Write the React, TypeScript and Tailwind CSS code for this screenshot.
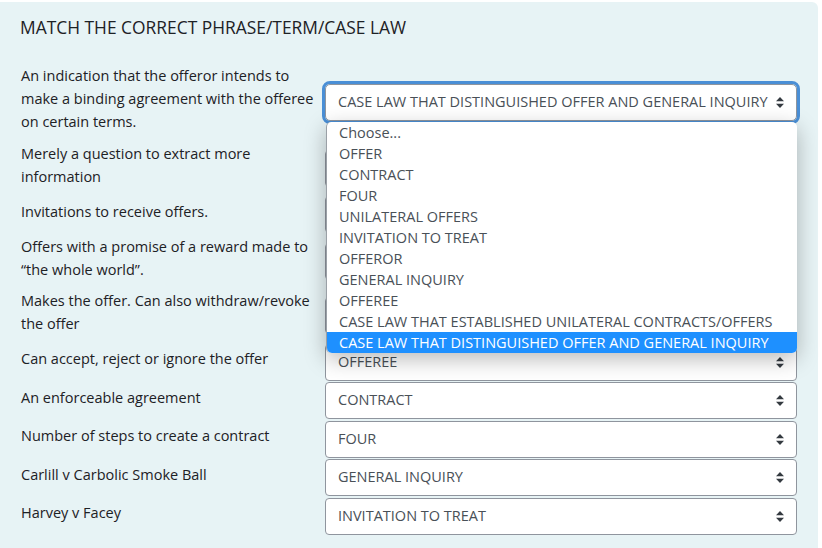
const font = "font-['Segoe_UI','Open_Sans','Noto_Sans',sans-serif]";

const options = [
  "Choose...",
  "OFFER",
  "CONTRACT",
  "FOUR",
  "UNILATERAL OFFERS",
  "INVITATION TO TREAT",
  "OFFEROR",
  "GENERAL INQUIRY",
  "OFFEREE",
  "CASE LAW THAT ESTABLISHED UNILATERAL CONTRACTS/OFFERS",
  "CASE LAW THAT DISTINGUISHED OFFER AND GENERAL INQUIRY",
];

// rows 2-5 sit under the open list, so their values are not drawn
const rows = [
  { label: "An indication that the offeror intends to make a binding agreement with the offeree on certain terms.", value: "CASE LAW THAT DISTINGUISHED OFFER AND GENERAL INQUIRY", open: true },
  { label: "Merely a question to extract more information", value: "" },
  { label: "Invitations to receive offers.", value: "" },
  { label: "Offers with a promise of a reward made to \u201cthe whole world\u201d.", value: "" },
  { label: "Makes the offer. Can also withdraw/revoke the offer", value: "" },
  { label: "Can accept, reject or ignore the offer", value: "OFFEREE" },
  { label: "An enforceable agreement", value: "CONTRACT" },
  { label: "Number of steps to create a contract", value: "FOUR" },
  { label: "Carlill v Carbolic Smoke Ball", value: "GENERAL INQUIRY" },
  { label: "Harvey v Facey", value: "INVITATION TO TREAT" },
];

function Caret() {
  return (
    <svg width="8" height="11" viewBox="0 0 8 11" className="shrink-0">
      <path d="M4 0 L8 4.2 L0 4.2 Z" fill="#343a40" />
      <path d="M0 6.8 L8 6.8 L4 11 Z" fill="#343a40" />
    </svg>
  );
}

function Select({ value, open }: { value: string; open?: boolean }) {
  return (
    <div className="relative w-[472px] shrink-0">
      <div
        className={
          open
            ? "flex h-[37px] items-center justify-between rounded-[5px] border border-[#8f959e] bg-white pl-3 pr-[12px] outline outline-[3px] outline-[#4a8fd6]"
            : "flex h-[37px] items-center justify-between rounded-[4px] border border-[#8f959e] bg-white pl-3 pr-[12px]"
        }
      >
        <span className="whitespace-nowrap text-[14.5px] leading-none text-[#495057]">{value}</span>
        <Caret />
      </div>
      {open && (
        <div className="absolute left-[1px] top-[38px] z-10 w-[471px] rounded-[5px] border-l border-[#9aa0a6] bg-white shadow-[0_6px_22px_rgba(0,0,0,0.28)]">
          {options.map((o, i) => (
            <div
              key={o}
              className={
                i === options.length - 1
                  ? "h-[21px] whitespace-nowrap rounded-b-[5px] bg-[#1e90ff] pl-3 text-[14.5px] leading-[21px] text-white"
                  : "h-[21px] whitespace-nowrap pl-3 text-[14.5px] leading-[21px] text-[#495057]"
              }
            >
              {o}
            </div>
          ))}
        </div>
      )}
    </div>
  );
}

export default function App() {
  return (
    <div className={`h-[548px] w-[822px] overflow-hidden bg-white ${font}`}>
      <div className="mr-[4px] mt-[2px] h-[546px] rounded-tr-[6px] bg-[#e7f3f5] pl-5 pt-[14px]">
        <h2 className="text-[17.4px] leading-[22px] text-[#1d2125]">MATCH THE CORRECT PHRASE/TERM/CASE LAW</h2>
        <div className="mt-[26px] flex flex-col gap-[1.5px]">
          {rows.map((r, i) => (
            <div key={i} className="flex items-center">
              <p className="w-[305px] shrink-0 pb-[7px] pl-[1px] pr-[8px] text-[14.5px] leading-[23px] text-[#1d2125]">
                {r.label}
              </p>
              <Select value={r.value} open={r.open} />
            </div>
          ))}
        </div>
      </div>
    </div>
  );
}
